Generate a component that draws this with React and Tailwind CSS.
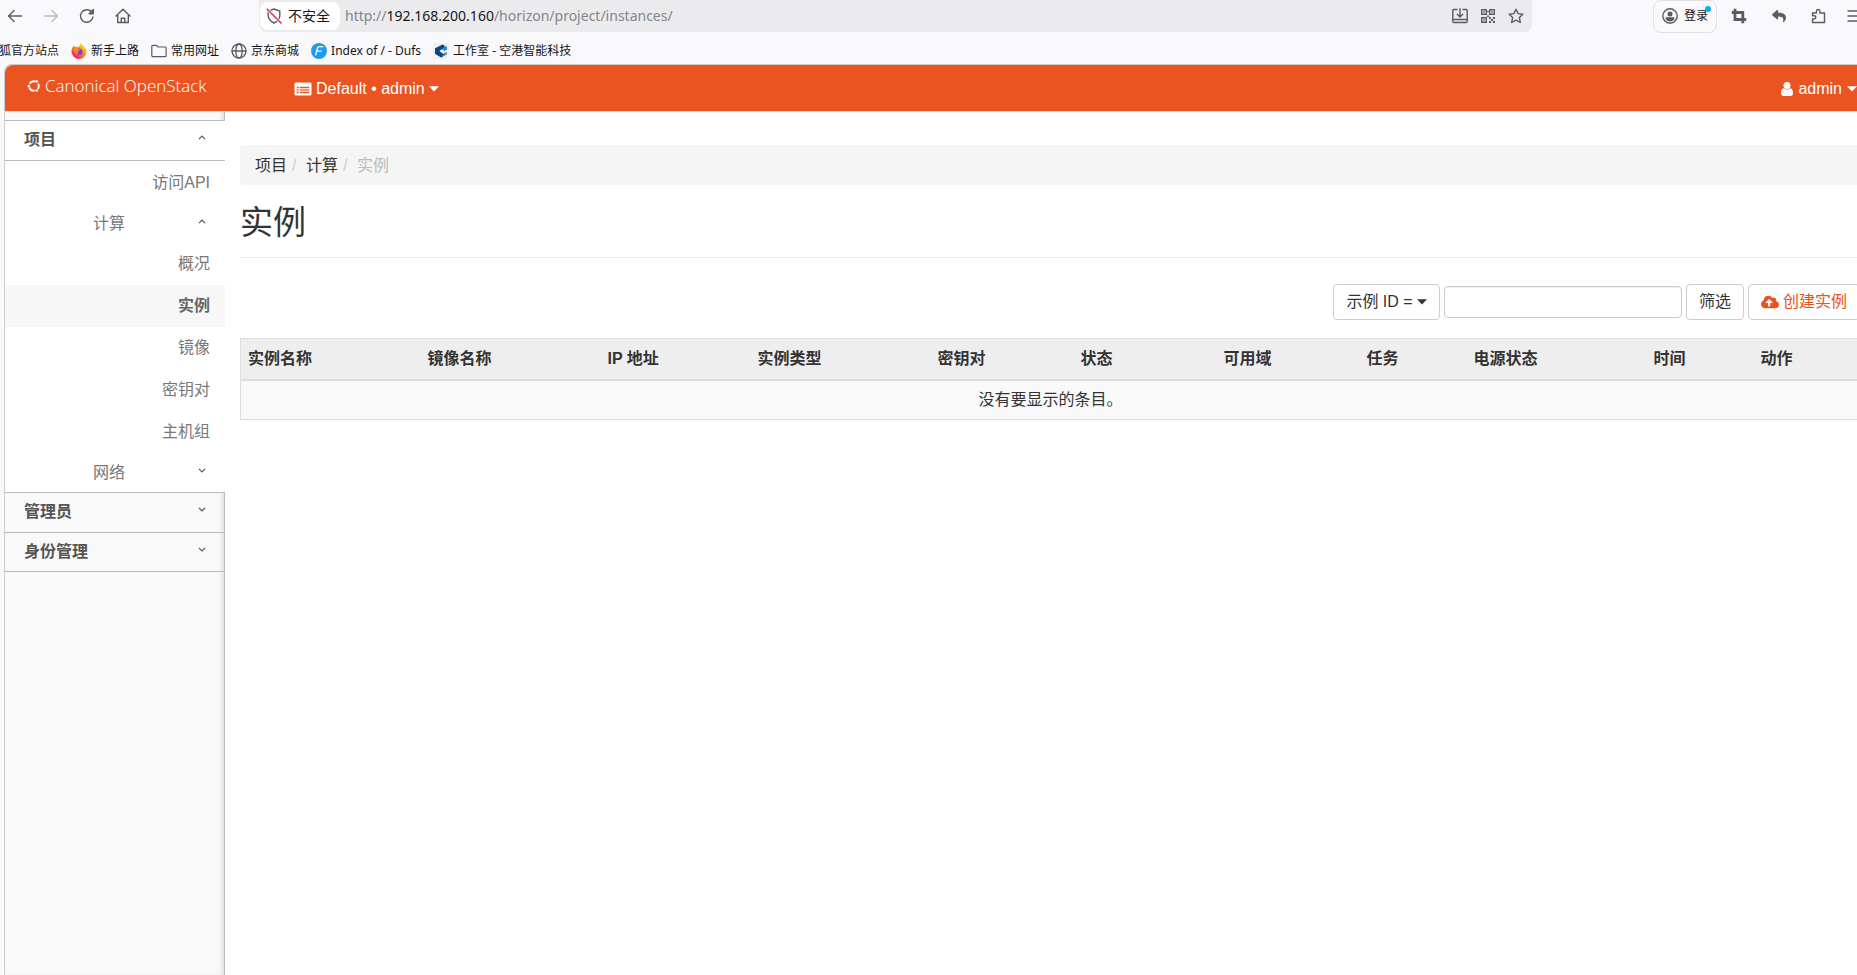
import React, { useState } from 'react';
import { FaCloudUploadAlt, FaReply } from 'react-icons/fa';

const BOOKMARKS = [
  { label: '狐官方站点' },
  { label: '新手上路', icon: 'firefox' },
  { label: '常用网址', icon: 'folder' },
  { label: '京东商城', icon: 'globe' },
  { label: 'Index of / - Dufs', icon: 'dufs' },
  { label: '工作室 - 空港智能科技', icon: 'studio' },
];

const COLUMNS = [
  { label: '实例名称', width: 'w-[180px]' },
  { label: '镜像名称', width: 'w-[180px]' },
  { label: 'IP 地址', width: 'w-[150px]' },
  { label: '实例类型', width: 'w-[180px]' },
  { label: '密钥对', width: 'w-[143px]' },
  { label: '状态', width: 'w-[143px]' },
  { label: '可用域', width: 'w-[143px]' },
  { label: '任务', width: 'w-[107px]' },
  { label: '电源状态', width: 'w-[180px]' },
  { label: '时间', width: 'w-[107px]' },
  { label: '动作', width: 'w-[107px]' },
];

const COMPUTE_PANELS = ['概况', '实例', '镜像', '密钥对', '主机组'];

const Stroke = ({ children, className = 'size-4', width = 1.4 }) => (
  <svg
    viewBox="0 0 16 16"
    className={className}
    fill="none"
    stroke="currentColor"
    strokeWidth={width}
    strokeLinecap="round"
    strokeLinejoin="round"
    aria-hidden="true"
  >
    {children}
  </svg>
);

const Caret = () => (
  <svg viewBox="0 0 10 6" className="h-[6px] w-[10px]" fill="currentColor" aria-hidden="true">
    <path d="M0 0.3h10L5 5.6z" />
  </svg>
);

const Chevron = ({ open }) => (
  <svg viewBox="0 0 8 9" className="h-[9px] w-[8px] text-[#555]" fill="none" stroke="currentColor" strokeWidth="1.2" aria-hidden="true">
    <path d={open ? 'M1 4.2L4 1.2l3 3' : 'M1 0.8l3 3 3-3'} />
  </svg>
);

const BookmarkIcon = ({ name }) => {
  if (name === 'firefox') {
    return (
      <svg viewBox="0 0 16 16" className="size-4" aria-hidden="true">
        <defs>
          <linearGradient id="fox" x1="0.85" y1="0.1" x2="0.2" y2="0.95">
            <stop offset="0" stopColor="#ffe226" />
            <stop offset="0.45" stopColor="#ff8a16" />
            <stop offset="1" stopColor="#f5156c" />
          </linearGradient>
        </defs>
        <path d="M10 0.2c1 1 1.6 2 1.9 2.9 1.4.8 3.6 3 3.6 5.4A7.5 7.5 0 0 1 .5 8.500c0-2.300.8-4.100 1.700-5.100L3 2.300l.6 1.900C5 3.500 7 3.900 7.800 3.800 8.600 2.400 8.800 1.200 10 .2z" fill="url(#fox)" />
        <circle cx="8.2" cy="8.7" r="3.3" fill="#7a3fe0" />
        <path d="M2.6 5.2c1.500-.9 3.400-.4 4.400.9 1 .2 1.800.4 2 .9-.5.9-1.900 1-2.400 1.900-.2 1 .5 1.800 1.600 1.900-2.700 1.200-5.600-.9-5.600-5.600z" fill="#ff8a1c" />
      </svg>
    );
  }
  if (name === 'folder') {
    return (
      <Stroke className="size-4 text-[#5b5b66]" width={1.2}>
        <path d="M.8 12.700V3.300c0-.6.4-1 1-1h3.700l1.700 1.700h6.900c.6 0 1 .4 1 1v7.700c0 .6-.4 1-1 1H1.800c-.6 0-1-.4-1-1z" />
      </Stroke>
    );
  }
  if (name === 'globe') {
    return (
      <Stroke className="size-4 text-[#5b5b66]" width={1.3}>
        <circle cx="8" cy="8" r="7" />
        <ellipse cx="8" cy="8" rx="3.2" ry="7" />
        <path d="M1 8h14" />
      </Stroke>
    );
  }
  if (name === 'dufs') {
    return (
      <svg viewBox="0 0 16 16" className="size-4" aria-hidden="true">
        <circle cx="8" cy="8" r="8" fill="#1e9bf0" />
        <path d="M12.3 3.7H8.400c-1.200 0-1.700.5-2 1.500L4.600 12.300M5.800 8.200h4.700" fill="none" stroke="#fff" strokeWidth="1.3" />
      </svg>
    );
  }
  return (
    <svg viewBox="0 0 16 16" className="size-4 bg-[#edf1f8]" aria-hidden="true">
      <path d="M9.500 1.500L2 5.200v5.600l6 3.700 2-1V10.800L6.300 8l5.200-3.400V2.500z" fill="#0b4584" />
      <path d="M11.500 2.500L14 4v2.500L11.500 8 9 6.300l2.500-1.700z" fill="#1d8ad6" />
      <path d="M8 14.500l6-3.300V9l-4 1.800z" fill="#1673c0" />
      <path d="M12 9.900L14 9v2.200l-2 1.100z" fill="#f0782d" />
    </svg>
  );
};

const BrowserBar = () => (
  <div className="bg-[#f9f9fb] text-[#5b5b66]">
    <div className="flex h-8 items-center">
      <div className="flex w-[259px] shrink-0 items-center gap-5 pl-[7px]">
        <button aria-label="后退">
          <Stroke><path d="M14.500 8h-13M7 2.500L1.500 8 7 13.500" /></Stroke>
        </button>
        <button aria-label="前进" disabled className="text-[#bcbcc2]">
          <Stroke><path d="M1.500 8h13M9 2.500L14.500 8 9 13.500" /></Stroke>
        </button>
        <button aria-label="刷新">
          <Stroke><path d="M14 9A6.300 6.300 0 1 1 12.500 3.800L14 5.300M14.300 1.500v4.200h-4.200z" /></Stroke>
        </button>
        <button aria-label="主页">
          <Stroke><path d="M1 8L8 1.200 15 8M2.700 7v7.500h10.600V7M6.200 14.500v-4.300h3.600v4.300" /></Stroke>
        </button>
      </div>
      <div className="flex h-8 w-[1273px] items-center rounded-b-lg bg-[#ebebed] pr-2 pl-px">
        <button className="flex h-7 w-20 shrink-0 items-center gap-[6px] rounded-lg bg-white pl-[6px] text-[14px] text-[#15141a]">
          <svg viewBox="0 0 16 16" className="size-4" fill="none" aria-hidden="true">
            <path d="M8 1l5.800 2v4.500c0 3.600-2.800 6-5.800 7.500-3-1.500-5.800-3.900-5.800-7.500V3z" stroke="#5b5b66" strokeWidth="1.4" />
            <path d="M1 1l14.500 14.500" stroke="#f9f9fb" strokeWidth="3" />
            <path d="M.8.8l14.700 14.700" stroke="#e22850" strokeWidth="1.4" />
          </svg>
          不安全
        </button>
        <p className="grow pb-px pl-[5px] font-['Noto_Sans',sans-serif] text-[14px] text-[#85858a]">
          http://<span className="text-[#15141a]">192.168.200.160</span>/horizon/project/instances/
        </p>
        <div className="flex items-center gap-3">
          <button aria-label="安装">
            <Stroke><path d="M5 1.500H1.800c-.5 0-1 .4-1 1v11c0 .6.500 1 1 1h12.400c.6 0 1-.4 1-1v-11c0-.6-.4-1-1-1H11M.8 11.500h14.400M8 .8v8M5.300 6.200L8 8.900l2.700-2.700" /></Stroke>
          </button>
          <button aria-label="二维码">
            <svg viewBox="0 0 16 16" className="size-4" fill="currentColor" aria-hidden="true">
              <path fillRule="evenodd" d="M1 1h6v6H1zm1.400 1.400v3.200h3.200V2.400zM9 1h6v6H9zm1.400 1.400v3.200h3.200V2.400zM1 9h6v6H1zm1.400 1.400v3.200h3.200v-3.200z" />
              <path d="M3.300 3.300h1.400v1.400H3.300zM11.300 3.300h1.400v1.400h-1.400zM3.300 11.300h1.400v1.400H3.300zM9 9h2v2H9zM13 9h2v2h-2zM11 11h2v2h-2zM9 13h2v2H9zM13 13h2v2h-2zM7 3h2v1H7zM7 7.500h2V9H7z" />
            </svg>
          </button>
          <button aria-label="收藏">
            <Stroke><path d="M8 1.200l2.100 4.400 4.800.6-3.500 3.400.9 4.900L8 12.200l-4.300 2.300.9-4.900L1.100 6.200l4.800-.6z" /></Stroke>
          </button>
        </div>
      </div>
      <div className="-mr-[9px] ml-auto flex items-center gap-[14px]">
        <button className="relative flex h-[33px] w-16 items-center gap-[6px] rounded-lg border border-[#e1e1e4] pl-2 text-[12px] text-[#15141a]">
          <Stroke className="size-4 text-[#5b5b66]">
            <circle cx="8" cy="8" r="7.2" />
            <circle cx="8" cy="6" r="1.8" fill="currentColor" />
            <path d="M4.200 10h7.600c-.3 1.700-1.800 2.800-3.800 2.800S4.500 11.700 4.200 10z" fill="currentColor" />
          </Stroke>
          登录
          <span className="absolute top-[5px] right-[5px] size-[6px] rounded-full bg-[#00b3f4]" />
        </button>
        <div className="flex items-center gap-6">
          <button aria-label="截图">
            <Stroke width={2.8}><path d="M4 .8v10.700h11.200M.8 4.500h11v10.700" strokeLinecap="butt" strokeLinejoin="miter" /></Stroke>
          </button>
          <button aria-label="撤销"><FaReply className="size-4 py-px" /></button>
          <button aria-label="扩展">
            <Stroke><path d="M1.500 14.500V11h1.700a1.600 1.600 0 0 0 0-3.300H1.500V5h4V3.200a1.700 1.700 0 0 1 3.400 0V5h4.600v9.500z" /></Stroke>
          </button>
          <button aria-label="菜单" className="-ml-1 pr-[3px]">
            <Stroke width={1.3}><path d="M1 3h15M1 8h15M1 13h15" /></Stroke>
          </button>
        </div>
      </div>
    </div>
    <nav
      className="-ml-px flex h-8 items-center gap-3 pt-[5px] font-['Noto_Sans','Noto_Sans_CJK_SC',sans-serif] text-[12px] whitespace-nowrap text-[#15141a]"
      aria-label="书签"
    >
      {BOOKMARKS.map(({ label, icon }) => (
        <a key={label} href="#bookmark" className="flex items-center gap-1">
          {icon && <BookmarkIcon name={icon} />}
          {label}
        </a>
      ))}
    </nav>
  </div>
);

const TopBar = () => (
  <header className="flex h-[47px] items-center rounded-tl-lg border-b border-[#ddd] bg-[#e95420] text-[16px] text-white">
    <a href="#home" className="flex w-[289px] items-center gap-1 pb-1 pl-[22px] font-['Open_Sans',sans-serif] text-[17px] font-light">
      <svg viewBox="0 0 14 14" className="size-[14px]" fill="none" stroke="currentColor" aria-hidden="true">
        <circle cx="7" cy="7" r="4.8" strokeWidth="1.9" strokeDasharray="6.450 3.603" strokeDashoffset="3.225" />
        <g fill="currentColor" stroke="none">
          <circle cx="1.8" cy="7" r="1.3" />
          <circle cx="9.6" cy="2.500" r="1.3" />
          <circle cx="9.6" cy="11.500" r="1.3" />
        </g>
      </svg>
      Canonical OpenStack
    </a>
    <button className="flex items-center gap-1 pt-px">
      <svg viewBox="0 0 18 14" className="h-[14px] w-[18px]" aria-hidden="true">
        <rect x="0.5" y="0.5" width="17" height="13" rx="1.5" fill="#fff" />
        <path d="M2 4h14v8H2z" fill="#fbd9cc" />
        <path d="M3 5.500h1.500M3 8h1.500M3 10.500h1.500M6 5.500h9M6 8h9M6 10.500h9" stroke="#e95420" strokeWidth="1" />
      </svg>
      Default • admin
      <Caret />
    </button>
    <button className="ml-auto flex items-center gap-[5px] pt-px">
      <svg viewBox="0 0 12 14" className="h-[14px] w-3" fill="currentColor" aria-hidden="true">
        <circle cx="6" cy="3.500" r="3.500" />
        <path d="M2.800 6.300C4.600 8 7.400 8 9.200 6.300c2 .3 2.800 2.300 2.800 4.900C12 13 11 14 9.600 14H2.400C1 14 0 13 0 11.200c0-2.600.8-4.600 2.800-4.900z" />
      </svg>
      admin
      <Caret />
    </button>
  </header>
);

const Sidebar = ({ active, onSelect }) => (
  <aside className="w-[220px] shrink-0 border-r border-[#bbb] bg-[#f9f9f9] text-[16px] text-[#777] shadow-[inset_-4px_0_4px_-2px_#ddd]">
    <div className="h-2" />
    <div className="-mr-px border-y border-[#bbb] bg-white">
      <button className="flex h-[39px] w-full items-center justify-between pr-[19px] pb-[2px] pl-[19px] font-bold text-[#555]">
        项目
        <Chevron open />
      </button>
    </div>
    <div className="-mr-px bg-white">
      <a href="#api" className="flex h-[42px] items-center justify-end pt-[2px] pr-[15px]">访问API</a>
      <button className="flex h-10 w-full items-center justify-between pt-px pr-[19px] pl-[88px]">
        计算
        <Chevron open />
      </button>
      {COMPUTE_PANELS.map((panel) => (
        <a
          key={panel}
          href="#panel"
          onClick={() => onSelect(panel)}
          className={
            panel === active
              ? 'flex h-[42px] items-center justify-end bg-[#f7f7f7] pr-[15px] font-bold text-[#666]'
              : 'flex h-[42px] items-center justify-end pr-[15px]'
          }
        >
          {panel}
        </a>
      ))}
      <button className="flex h-[39px] w-full items-center justify-between pr-[19px] pl-[88px]">
        网络
        <Chevron />
      </button>
    </div>
    <button className="flex h-10 w-full items-center justify-between border-t border-[#bbb] pr-[18px] pb-[2px] pl-[19px] font-bold text-[#555]">
      管理员
      <Chevron />
    </button>
    <button className="flex h-10 w-full items-center justify-between border-y border-[#bbb] pr-[18px] pb-px pl-[19px] font-bold text-[#555]">
      身份管理
      <Chevron />
    </button>
  </aside>
);

const Instances = () => {
  const [filter, setFilter] = useState('');

  return (
    <main className="-mr-[3px] min-w-0 grow pt-[33px] pl-[15px] text-[16px] text-[#333]">
      <nav className="flex h-10 items-center rounded bg-[#f5f5f5] pt-px pl-[15px]" aria-label="breadcrumb">
        <a href="#project">项目</a>
        <span className="w-[19px] pl-[5px] text-[#ccc]">/</span>
        <a href="#compute">计算</a>
        <span className="w-[19px] pl-[5px] text-[#ccc]">/</span>
        <span className="text-[#bbb]">实例</span>
      </nav>

      <h1 className="flex h-[73px] items-center border-b border-[#eee] pt-1 text-[33px]">实例</h1>

      <div className="flex items-center justify-end gap-1 pt-[26px] pb-[18px]">
        <button className="flex h-9 w-[107px] items-center justify-center gap-1 rounded border border-[#ccc] bg-white">
          示例 ID =
          <Caret />
        </button>
        <input
          type="text"
          aria-label="筛选"
          value={filter}
          onChange={(e) => setFilter(e.target.value)}
          className="h-8 w-[238px] rounded border border-[#ccc] px-2 shadow-[inset_0_1px_1px_#eee]"
        />
        <button className="h-9 w-[58px] rounded border border-[#ccc] bg-white">筛选</button>
        <button className="flex h-9 w-[112px] items-center gap-1 rounded border border-[#ccc] bg-white pl-3 whitespace-nowrap text-[#e95420]">
          <FaCloudUploadAlt className="size-[18px]" />
          创建实例
        </button>
      </div>

      <table className="w-full table-fixed border-collapse border border-[#ddd]">
        <thead>
          <tr className="h-[41px] border-b-2 border-[#ddd] bg-[#eee]">
            {COLUMNS.map(({ label, width }) => (
              <th key={label} className={`${width} px-[7px] text-left font-bold`}>{label}</th>
            ))}
          </tr>
        </thead>
        <tbody>
          <tr className="h-10 bg-[#f9f9f9]">
            <td colSpan={COLUMNS.length} className="text-center">没有要显示的条目。</td>
          </tr>
        </tbody>
      </table>
    </main>
  );
};

export default function App() {
  const [active, setActive] = useState('实例');

  return (
    <div className="flex min-h-screen flex-col overflow-hidden bg-[#f9f9fb] font-['Liberation_Sans','Noto_Sans_CJK_SC',sans-serif]">
      <BrowserBar />
      <div className="ml-1 flex grow flex-col rounded-tl-lg border-t border-l border-[#ccc] bg-white">
        <TopBar />
        <div className="flex grow">
          <Sidebar active={active} onSelect={setActive} />
          <Instances />
        </div>
      </div>
    </div>
  );
}
